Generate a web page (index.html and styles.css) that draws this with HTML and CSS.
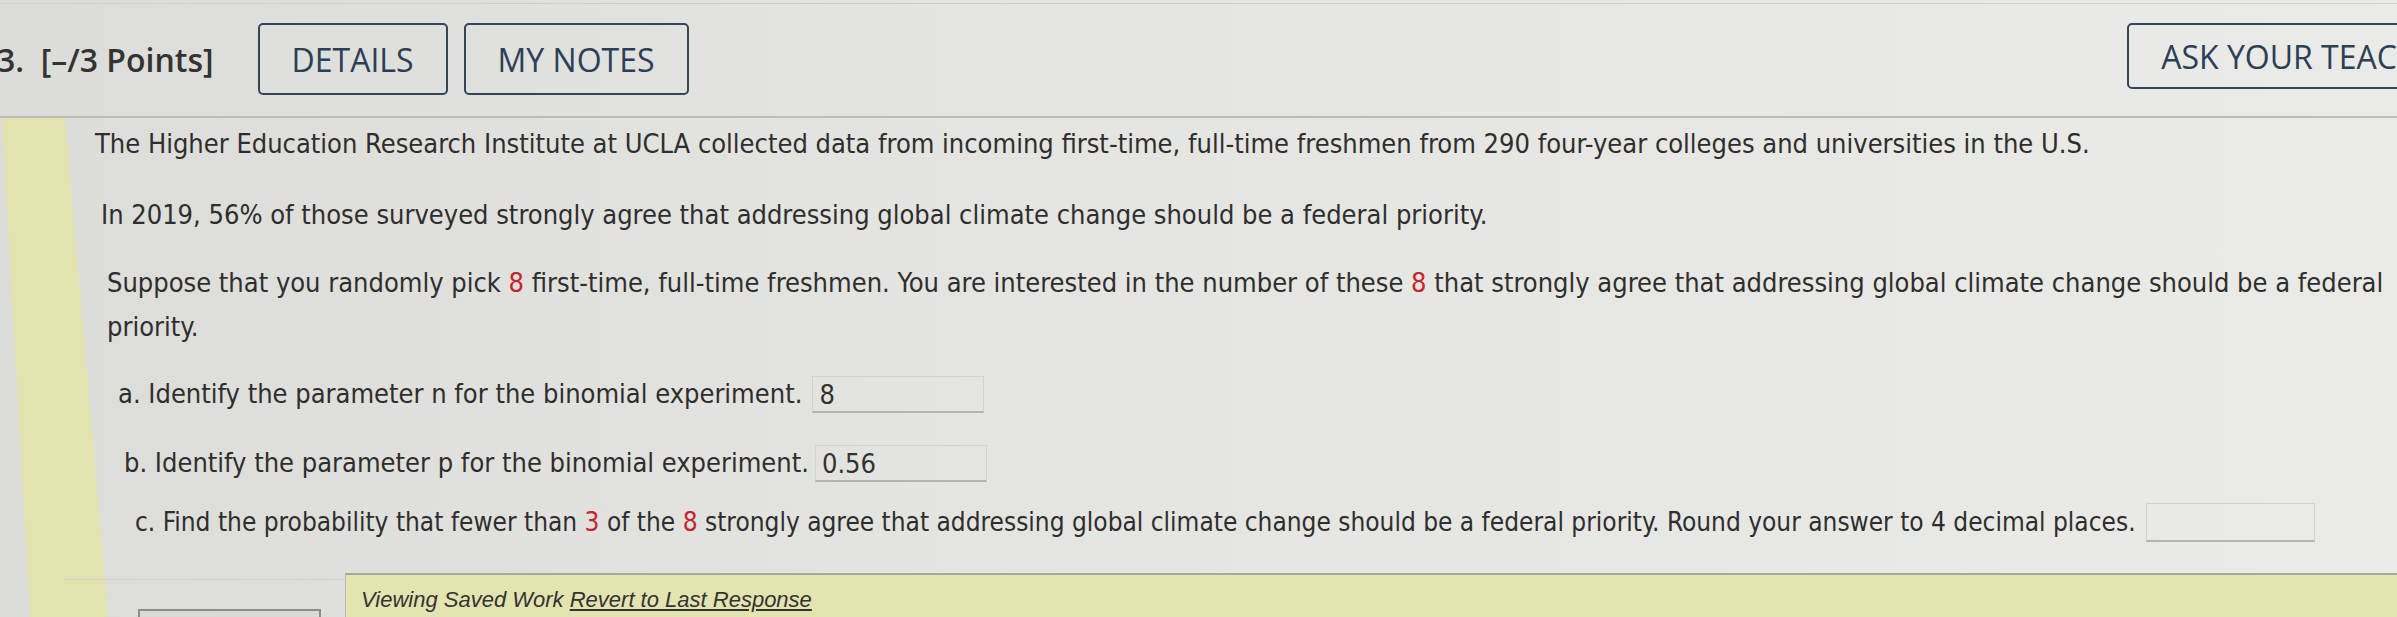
FILE: index.html
```html
<!DOCTYPE html>
<html lang="en">
<head>
<meta charset="utf-8">
<title>Question 3</title>
<link rel="stylesheet" href="styles.css">
</head>
<body>
<div class="page">
  <header class="head">
    <span class="qnum">3.&nbsp; [–/3 Points]</span>
    <button class="btn">DETAILS</button>
    <button class="btn">MY NOTES</button>
    <button class="btn btn-ask">ASK YOUR TEACHER</button>
  </header>
  <div class="main">
    <div class="strip"></div>
    <div class="question">
      <p class="row r1">The Higher Education Research Institute at UCLA collected data from incoming first-time, full-time freshmen from 290 four-year colleges and universities in the U.S.</p>
      <p class="row r2">In 2019, 56% of those surveyed strongly agree that addressing global climate change should be a federal priority.</p>
      <p class="row r3">Suppose that you randomly pick <span class="red">8</span> first-time, full-time freshmen. You are interested in the number of these <span class="red">8</span> that strongly agree that addressing global climate change should be a federal priority.</p>
      <div class="row part r4"><span>a. Identify the parameter n for the binomial experiment.</span><span class="answer">8</span></div>
      <div class="row part r5"><span>b. Identify the parameter p for the binomial experiment.</span><span class="answer">0.56</span></div>
      <div class="row part r6"><span>c. Find the probability that fewer than <span class="red">3</span> of the <span class="red">8</span> strongly agree that addressing global climate change should be a federal priority. Round your answer to 4 decimal places.</span><span class="answer answer-c"></span></div>
      <div class="saved">
        <div class="saved-left"><span class="grey-btn"></span></div>
        <div class="saved-bar">Viewing Saved Work <a class="revert" href="#">Revert to Last Response</a></div>
      </div>
    </div>
  </div>
</div>
</body>
</html>
```

FILE: styles.css
```css
html, body {
  margin: 0;
  padding: 0;
}
body {
  width: 2397px;
  height: 617px;
  overflow: hidden;
  background: linear-gradient(90deg, #dcdcd9 0%, #e4e4e1 40%, #eaeae7 100%);
  color: #2e2e2e;
  font-family: "DejaVu Sans", Verdana, sans-serif;
}
.page {
  display: flex;
  flex-direction: column;
  height: 617px;
}
.head {
  box-sizing: border-box;
  height: 115px;
  display: flex;
  align-items: center;
  border-top: 1px solid #cfcfcc;
  border-bottom: 2px solid #bcbcb8;
  margin-top: 3px;
  margin-right: -95px;
  padding-bottom: 2px;
}
.qnum {
  font-family: "Open Sans", "Liberation Sans", sans-serif;
  font-weight: 600;
  font-size: 32px;
  color: #333;
  margin-left: -3px;
  margin-right: 44px;
  white-space: pre;
}
.btn {
  box-sizing: border-box;
  height: 72px;
  padding: 0 32px;
  margin-right: 16px;
  border: 2.5px solid #33475c;
  border-radius: 5px;
  background: transparent;
  color: #2b3f56;
  font-family: "Open Sans", "Liberation Sans", sans-serif;
  font-size: 32px;
  font-weight: 400;
  display: flex;
  align-items: center;
}
.btn-ask {
  margin-left: auto;
  margin-right: 0;
  height: 66px;
  margin-top: -6px;
  padding: 0 32px;
}
.main {
  flex: 1;
  display: flex;
  min-width: 0;
}
.strip {
  flex: none;
  width: 64px;
  position: relative;
}
.strip::before {
  content: "";
  position: absolute;
  top: 0;
  bottom: 0;
  left: 0;
  right: -46px;
  background: #e2e3ae;
  clip-path: polygon(2px 0, 65px 0, 108px 100%, 30px 100%);
}
.question {
  flex: 1;
  min-width: 0;
  display: flex;
  flex-direction: column;
  padding-top: 4px;
  font-family: "DejaVu Sans", Verdana, sans-serif;
  font-stretch: condensed;
  font-size: 27px;
  line-height: 44px;
  position: relative;
}
.row {
  margin: 0;
}
.r1 { margin-left: 31px; }
.r2 { margin-left: 37px; margin-top: 27px; }
.r3 { margin-left: 43px; margin-top: 24px; }
.r4 { margin-left: 54px; margin-top: 23px; }
.r5 { margin-left: 60px; margin-top: 25px; }
.r6 { margin-left: 71px; margin-top: 15px; font-size: 26px; }
.red {
  color: #c4262d;
}
.part {
  display: flex;
  align-items: center;
  gap: 10px;
  height: 44px;
  white-space: nowrap;
}
.r5 {
  gap: 6px;
}
.answer {
  box-sizing: border-box;
  width: 172px;
  height: 37px;
  padding: 0 6px;
  border: 1px solid #d2d2cf;
  border-bottom: 2px solid #b3b3b0;
  line-height: 35px;
  color: #333;
}
.answer-c {
  width: 169px;
  height: 39px;
}
.saved {
  margin-top: auto;
  display: flex;
  height: 44px;
}
.saved-left {
  flex: none;
  width: 281px;
  border-top: 1px solid #d0d0cc;
  margin-top: 6px;
  display: flex;
}
.grey-btn {
  box-sizing: border-box;
  margin-left: 74px;
  margin-top: 29px;
  width: 183px;
  height: 20px;
  border: 2px solid #8c8c8a;
  background: #dadad7;
}
.saved-bar {
  flex: 1;
  background: #e3e4b0;
  border-top: 2px solid #a8a99d;
  border-left: 1px solid #b8b9a8;
  padding-left: 15px;
  padding-top: 12px;
  font-family: "Liberation Sans", Arial, sans-serif;
  font-style: italic;
  font-size: 22px;
  line-height: 26px;
  color: #333;
}
.revert {
  color: #333;
  text-decoration: underline;
}
```
